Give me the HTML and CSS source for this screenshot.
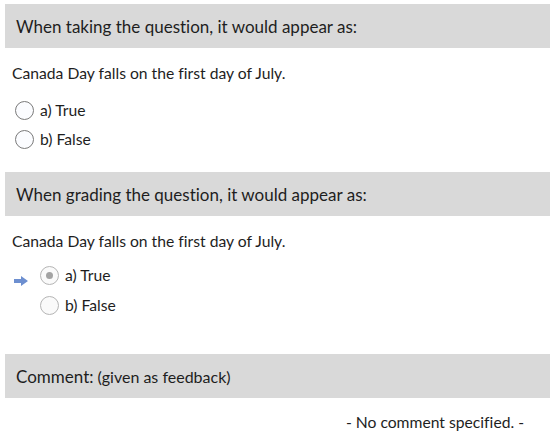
FILE: index.html
```html
<!DOCTYPE html>
<html>
<head>
<meta charset="utf-8">
<link rel="stylesheet" href="styles.css">
</head>
<body>
<div class="page">
  <div class="bar">When taking the question, it would appear as:</div>
  <div class="question">Canada Day falls on the first day of July.</div>
  <div class="options">
    <div class="opt"><span class="radio"></span><span>a) True</span></div>
    <div class="opt"><span class="radio"></span><span>b) False</span></div>
  </div>

  <div class="bar bar2">When grading the question, it would appear as:</div>
  <div class="question">Canada Day falls on the first day of July.</div>
  <div class="options graded">
    <div class="opt"><span class="mark"><svg width="14" height="10" viewBox="0 0 14 10"><path d="M0 3h7V0l7 5-7 5V7H0z" fill="#6d8fd0"/></svg></span><span class="radio dis checked"></span><span>a) True</span></div>
    <div class="opt"><span class="mark"></span><span class="radio dis"></span><span>b) False</span></div>
  </div>

  <div class="bar bar3"><span class="cm">Comment:</span> <span class="cm-sub">(given as feedback)</span></div>
  <div class="nocomment">- No comment specified. -</div>
</div>
</body>
</html>
```
FILE: styles.css
```css
html, body { margin: 0; padding: 0; background: #fff; }
body { font-family: Lato, "Liberation Sans", sans-serif; color: #1e1e1e; font-variant-ligatures: none; }
.page { padding: 4px 0 0 5px; }
.bar { background: #d9d9d9; height: 44px; display: flex; align-items: center; padding-left: 11px; font-size: 17px; }
.bar2 { margin-top: 23px; }
.bar3 { margin-top: 39px; }
.question { font-size: 15.7px; padding: 15px 0 0 7px; line-height: 20px; }
.options { padding: 17px 0 0 10px; display: flex; flex-direction: column; gap: 9px; font-size: 15.7px; }
.opt { display: flex; align-items: center; gap: 6px; line-height: 20px; height: 20px; }
.radio { width: 17px; height: 17px; border: 1px solid #7a7a7a; border-radius: 50%; background: #fbfcff; box-sizing: content-box; position: relative; }
.graded { padding: 14px 0 0 9px; gap: 10px; }
.mark { width: 20px; display: flex; align-items: center; }
.mark svg { margin-top: 11px; }
.radio.dis { border-color: #b5b5b5; background: #fafafa; }
.radio.checked::after { content: ""; position: absolute; left: 5px; top: 5px; width: 7px; height: 7px; border-radius: 50%; background: #a3a3a3; }
.cm { font-size: 17px; }
.cm-sub { font-size: 16px; margin-left: 4px; }
.nocomment { font-size: 15.7px; line-height: 20px; text-align: right; padding: 14px 26px 0 0; }
```
